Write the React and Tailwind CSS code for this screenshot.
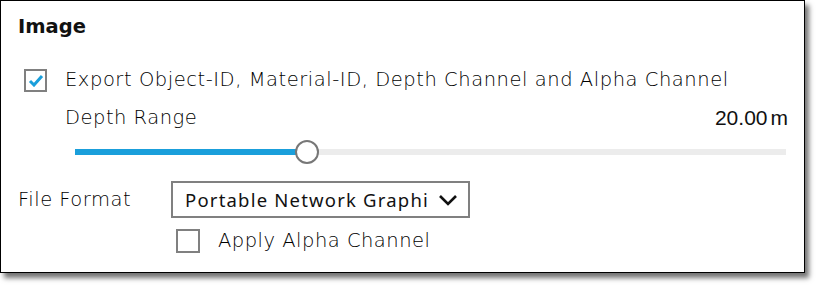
export default function App() {
  const light = { fontFamily: "'DejaVu Sans', sans-serif" };
  return (
    <div className="w-[820px] h-[287px] bg-white">
      <div className="w-[805px] h-[273px] border border-black bg-white shadow-[4px_5px_5px_rgba(0,0,0,0.55)] flex flex-col">
        <div className="pl-[17px] pt-[11px] h-[30px] leading-[30px] text-[19.5px] font-bold text-[#111]" style={{ fontFamily: "'DejaVu Sans', sans-serif" }}>
          Image
        </div>

        <div className="flex items-center mt-[37px] pl-[23px] h-[24px]">
          <div className="w-[23px] h-[23px] border-2 border-[#808080] flex items-center justify-center">
            <svg width="16" height="13" viewBox="0 0 16 13">
              <polyline points="2,7 6,11 14,2" fill="none" stroke="#1a9fdb" strokeWidth="3" />
            </svg>
          </div>
          <span className="ml-[18px] text-[19.5px] tracking-[0.55px] font-extralight text-black" style={light}>
            Export Object-ID, Material-ID, Depth Channel and Alpha Channel
          </span>
        </div>

        <div className="flex items-center justify-between mt-[14px] pl-[64px] pr-[16px] h-[24px]">
          <span className="text-[19.5px] tracking-[0.5px] font-extralight text-black" style={light}>Depth Range</span>
          <span className="text-[21px] text-[#111]" style={{ fontFamily: "'Liberation Sans', Arial, sans-serif" }}>
            20.00<span className="ml-[3px]">m</span>
          </span>
        </div>

        <div className="relative mt-[10px] ml-[74px] w-[711px] h-[24px] flex items-center">
          <div className="w-full h-[6px] bg-[#ececec] flex">
            <div className="w-[232px] h-full bg-[#1a9fdb]" />
          </div>
          <div className="absolute left-[220px] top-0 w-[24px] h-[24px] rounded-full bg-white border-2 border-[#777]" />
        </div>

        <div className="flex items-center mt-[17px] h-[37px]">
          <span className="pl-[17px] w-[170px] text-[19.5px] tracking-[0.5px] font-extralight text-black" style={light}>File Format</span>
          <div className="w-[299px] h-[37px] border-2 border-[#808080] flex items-center pl-[12px] pr-[10px]">
            <span className="flex-1 overflow-hidden whitespace-nowrap text-[18.5px] tracking-[1.2px] text-[#111]" style={{ fontFamily: "'Noto Sans', sans-serif" }}>
              Portable Network Graphics (*.png)
            </span>
            <svg width="20" height="12" viewBox="0 0 20 12" className="ml-[10px]">
              <polyline points="2,2 10,10 18,2" fill="none" stroke="#111" strokeWidth="2.6" />
            </svg>
          </div>
        </div>

        <div className="flex items-center mt-[11px] pl-[175px] h-[24px]">
          <div className="w-[24px] h-[24px] border-2 border-[#808080]" />
          <span className="ml-[18px] text-[19.5px] tracking-[0.5px] font-extralight text-black" style={light}>Apply Alpha Channel</span>
        </div>
      </div>
    </div>
  );
}
